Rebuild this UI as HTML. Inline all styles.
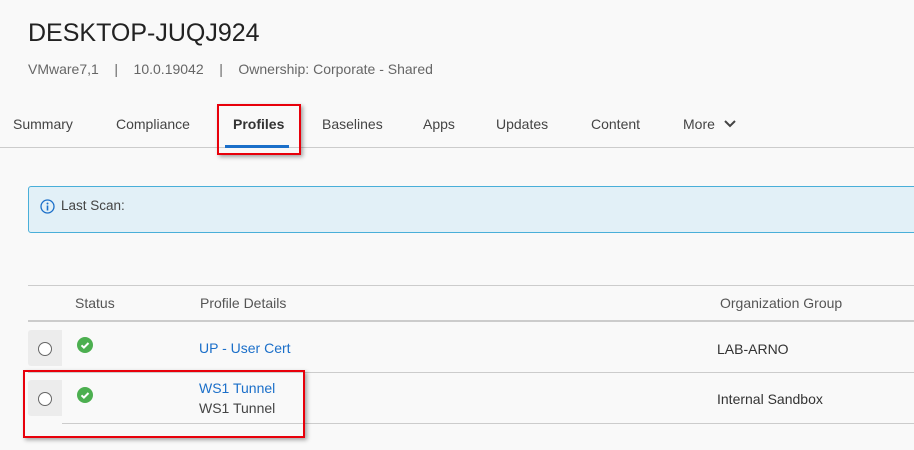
<!DOCTYPE html>
<html><head><style>
body{margin:0;width:914px;height:450px;background:#f9f9f9;font-family:"Liberation Sans",sans-serif;position:relative;overflow:hidden;color:#333}
.a{position:absolute;white-space:nowrap}
.tab{position:absolute;top:116px;font-size:14px;color:#444}
.red{position:absolute;border:2px solid #e8000b;box-shadow:2px 2px 4px rgba(0,0,0,.35)}
</style></head><body>
<div class="a" style="left:28px;top:19px;font-size:25px;color:#222">DESKTOP-JUQJ924</div>
<div class="a" style="left:28px;top:61px;font-size:14px;color:#666">VMware7,1 &nbsp;&nbsp;&nbsp;| &nbsp;&nbsp;&nbsp;10.0.19042 &nbsp;&nbsp;&nbsp;| &nbsp;&nbsp;&nbsp;Ownership: Corporate - Shared</div>
<div class="tab" style="left:13px">Summary</div>
<div class="tab" style="left:116px">Compliance</div>
<div class="tab" style="left:233px;font-weight:bold;color:#333">Profiles</div>
<div class="tab" style="left:322px">Baselines</div>
<div class="tab" style="left:423px">Apps</div>
<div class="tab" style="left:496px">Updates</div>
<div class="tab" style="left:591px">Content</div>
<div class="tab" style="left:683px">More <svg width="14" height="10" viewBox="0 0 14 10" style="margin-left:4px"><path d="M2 2l5 5 5-5" stroke="#444" stroke-width="2" fill="none"/></svg></div>
<div class="a" style="left:0;top:147px;width:914px;height:1px;background:#ccc"></div>
<div class="a" style="left:225px;top:145px;width:64px;height:3px;background:#1b6fc9"></div>
<div class="red" style="left:217px;top:104px;width:80px;height:47px"></div>
<div class="a" style="left:28px;top:186px;width:890px;height:45px;background:#e2f0f7;border:1px solid #49afd9;border-radius:3px"></div>
<svg class="a" style="left:40px;top:199px" width="15" height="15" viewBox="0 0 15 15"><circle cx="7.5" cy="7.5" r="6.5" fill="none" stroke="#1b6fc9" stroke-width="1.3"/><circle cx="7.5" cy="4.5" r="1" fill="#1b6fc9"/><path d="M7.5 6.5v5" stroke="#1b6fc9" stroke-width="1.6"/></svg>
<div class="a" style="left:61px;top:198px;font-size:13.5px;color:#444">Last Scan:</div>
<div class="a" style="left:28px;top:285px;width:890px;height:1px;background:#ccc"></div>
<div class="a" style="left:75px;top:295px;font-size:14px;color:#555">Status</div>
<div class="a" style="left:200px;top:295px;font-size:14px;color:#555">Profile Details</div>
<div class="a" style="left:720px;top:295px;font-size:14px;color:#555">Organization Group</div>
<div class="a" style="left:28px;top:320px;width:890px;height:2px;background:#ccc"></div>
<div class="a" style="left:28px;top:330px;width:34px;height:36px;background:#ececec;border-radius:3px 0 0 3px"></div>
<div class="a" style="left:38px;top:342px;width:12px;height:12px;border:1px solid #666;border-radius:50%;background:#fff"></div>
<svg class="a" style="left:77px;top:337px" width="16" height="16"><circle cx="8" cy="8" r="8" fill="#4caf50"/><path d="M4.5 8.3l2.4 2.3 4.6-4.6" stroke="#fff" stroke-width="2" fill="none"/></svg>
<div class="a" style="left:199px;top:340px;font-size:14px;color:#1b6fc9">UP - User Cert</div>
<div class="a" style="left:717px;top:341px;font-size:14px;color:#333">LAB-ARNO</div>
<div class="a" style="left:28px;top:372px;width:890px;height:1px;background:#ccc"></div>
<div class="a" style="left:28px;top:380px;width:34px;height:36px;background:#ececec;border-radius:3px 0 0 3px"></div>
<div class="a" style="left:38px;top:392px;width:12px;height:12px;border:1px solid #666;border-radius:50%;background:#fff"></div>
<svg class="a" style="left:77px;top:387px" width="16" height="16"><circle cx="8" cy="8" r="8" fill="#4caf50"/><path d="M4.5 8.3l2.4 2.3 4.6-4.6" stroke="#fff" stroke-width="2" fill="none"/></svg>
<div class="a" style="left:199px;top:380px;font-size:14px;color:#1b6fc9">WS1 Tunnel</div>
<div class="a" style="left:199px;top:400px;font-size:14px;color:#444">WS1 Tunnel</div>
<div class="a" style="left:717px;top:391px;font-size:14px;color:#333">Internal Sandbox</div>
<div class="a" style="left:62px;top:423px;width:856px;height:1px;background:#ccc"></div>
<div class="red" style="left:23px;top:370px;width:278px;height:64px"></div>
</body></html>
